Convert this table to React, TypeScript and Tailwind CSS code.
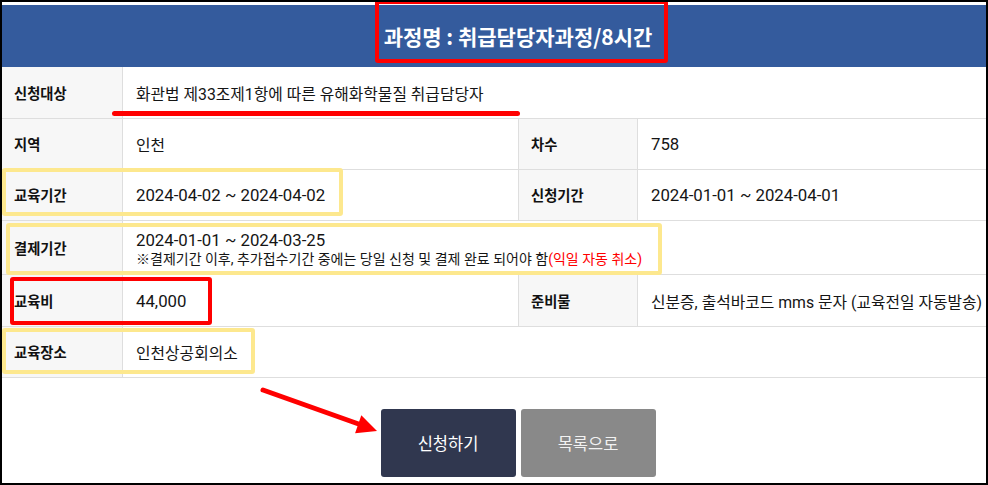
import React from "react";

const L =
  "bg-[#f7f7f7] border-r border-b border-[#dedede] flex items-center pl-[12px] font-bold text-[14.3px] text-[#111] font-['Noto_Sans_CJK_KR',sans-serif]";
const V =
  "border-b border-[#dedede] flex items-center pl-[13px] text-[#151515] font-[Roboto,'Noto_Sans_CJK_KR',sans-serif]";
const H = "text-[15.8px] pt-[4px]";
const D = "text-[16.8px] pt-[2px]";

export default function App() {
  return (
    <div className="relative w-[988px] h-[485px] bg-white border-2 border-black overflow-hidden">
      <div className="pt-[3px]">
        <div className="h-[62px] bg-[#345b9d] flex items-center justify-center pl-[48px] pt-[1px]">
          <span className="text-white font-bold text-[21px] font-['Noto_Sans_CJK_KR',sans-serif]">
            과정명 : 취급담당자과정/8시간
          </span>
        </div>

        <div className="grid grid-cols-[121px_396px_119px_1fr] grid-rows-[52px_51px_51px_54px_52px_51px]">
          <div className={L}>신청대상</div>
          <div className={`${V} col-span-3 ${H}`}>
            화관법 제33조제1항에 따른 유해화학물질 취급담당자
          </div>

          <div className={L}>지역</div>
          <div className={`${V} border-r ${H}`}>인천</div>
          <div className={`${L} pl-[11px]`}>차수</div>
          <div className={`${V} pl-[12px] ${D}`}>758</div>

          <div className={L}>교육기간</div>
          <div className={`${V} border-r ${D}`}>2024-04-02 ~ 2024-04-02</div>
          <div className={`${L} pl-[11px]`}>신청기간</div>
          <div className={`${V} pl-[12px] ${D}`}>2024-01-01 ~ 2024-04-01</div>

          <div className={L}>결제기간</div>
          <div className={`${V} col-span-3 flex-col items-start justify-center pt-[4px]`}>
            <div className="text-[16.8px] leading-[18px]">2024-01-01 ~ 2024-03-25</div>
            <div className="text-[14px] leading-[18px] pt-[1px]">
              ※결제기간 이후, 추가접수기간 중에는 당일 신청 및 결제 완료 되어야 함
              <span className="text-[#ff0000]">(익일 자동 취소)</span>
            </div>
          </div>

          <div className={L}>교육비</div>
          <div className={`${V} border-r ${D}`}>44,000</div>
          <div className={`${L} pl-[11px]`}>준비물</div>
          <div className={`${V} pl-[12px] ${H}`}>
            신분증, 출석바코드 mms 문자 (교육전일 자동발송)
          </div>

          <div className={L}>교육장소</div>
          <div className={`${V} col-span-3 ${H}`}>인천상공회의소</div>
        </div>

        <div className="mt-[31px] flex justify-center pl-[48px] gap-[5px] font-['Noto_Sans_CJK_KR',sans-serif]">
          <button className="w-[135px] h-[68px] rounded-[3px] bg-[#30374f] text-white text-[16.5px]">
            신청하기
          </button>
          <button className="w-[135px] h-[68px] rounded-[3px] bg-[#898989] text-[#f2f2f2] text-[16.5px]">
            목록으로
          </button>
        </div>
      </div>

      {/* annotations */}
      <div className="absolute left-[373px] top-[-2px] w-[293px] h-[63px] border-[4px] border-[#ff0000] rounded-[3px] pointer-events-none" />
      <div className="absolute left-[110px] top-[109px] w-[408px] h-[5px] bg-[#ff0000] rounded-full pointer-events-none" />
      <div className="absolute left-[0px] top-[166px] w-[341px] h-[48px] border-[4px] border-[#fde88e] rounded-[3px] pointer-events-none" />
      <div className="absolute left-[4px] top-[221px] w-[656px] h-[52px] border-[4px] border-[#fde88e] rounded-[3px] pointer-events-none" />
      <div className="absolute left-[8px] top-[275px] w-[202px] h-[48px] border-[4px] border-[#ff0000] rounded-[3px] pointer-events-none" />
      <div className="absolute left-[0px] top-[326px] w-[253px] h-[46px] border-[4px] border-[#fde88e] rounded-[3px] pointer-events-none" />
      <svg
        className="absolute left-[-2px] top-[-2px] pointer-events-none"
        width="988"
        height="485"
        viewBox="0 0 988 485"
      >
        <line x1="263" y1="390" x2="360" y2="424.5" stroke="#ff0000" strokeWidth="5" strokeLinecap="round" />
        <polygon points="377,431 361.3,415.2 355.1,433.2" fill="#ff0000" />
      </svg>
    </div>
  );
}
